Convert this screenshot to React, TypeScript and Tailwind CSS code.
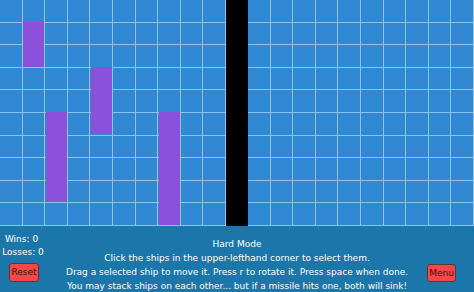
import React from "react";

const CELL = 22.6;

type Ship = { col: number; row: number; len: number };
const ships: Ship[] = [
  { col: 1, row: 1, len: 2 },
  { col: 4, row: 3, len: 3 },
  { col: 2, row: 5, len: 4 },
  { col: 7, row: 5, len: 5 },
];

function Grid({ withShips }: { withShips?: boolean }) {
  return (
    <div className="relative w-[226px] h-[226px] bg-[#3189d4]">
      <div className="grid grid-cols-10 grid-rows-10 w-full h-full">
        {Array.from({ length: 100 }).map((_, i) => (
          <div key={i} className="border-r border-b border-[#8fc4ee]" />
        ))}
      </div>
      {withShips &&
        ships.map((s, i) => (
          <div
            key={i}
            className="absolute bg-[#8b50dc]"
            style={{
              left: s.col * CELL + 0.4,
              top: s.row * CELL - 0.6,
              width: CELL - 1.2,
              height: s.len * CELL - 0.6,
            }}
          />
        ))}
    </div>
  );
}

export default function App() {
  return (
    <div
      className="w-[474px] h-[292px] overflow-hidden flex flex-col bg-[#1b76aa] text-white"
      style={{ fontFamily: '"DejaVu Sans", sans-serif' }}
    >
      <div className="flex h-[226px]">
        <Grid withShips />
        <div className="w-[22px] h-[226px] bg-black" />
        <Grid />
      </div>
      <div className="grid grid-cols-[48px_1fr_48px] h-[66px] text-[9px]">
        <div className="flex flex-col items-center pt-[7px] leading-[13px]">
          <div className="pr-[5px]">Wins: 0</div>
          <div className="pr-[2px]">Losses: 0</div>
          <button className="mt-[4px] w-[30px] h-[19px] rounded-[3px] border border-[#5e3535] bg-[#f44848] text-[#4a0d0d] text-[9px] leading-none flex items-center justify-center">
            Reset
          </button>
        </div>
        <div className="flex flex-col items-center pt-[11px] leading-[14px] whitespace-nowrap">
          <div>Hard Mode</div>
          <div>Click the ships in the upper-lefthand corner to select them.</div>
          <div>Drag a selected ship to move it. Press r to rotate it. Press space when done.</div>
          <div>You may stack ships on each other... but if a missile hits one, both will sink!</div>
        </div>
        <div className="flex justify-start pt-[38px]">
          <button className="ml-[1px] w-[29px] h-[18px] rounded-[3px] border border-[#5e3535] bg-[#f44848] text-[#4a0d0d] text-[9px] leading-none flex items-center justify-center">
            Menu
          </button>
        </div>
      </div>
    </div>
  );
}
